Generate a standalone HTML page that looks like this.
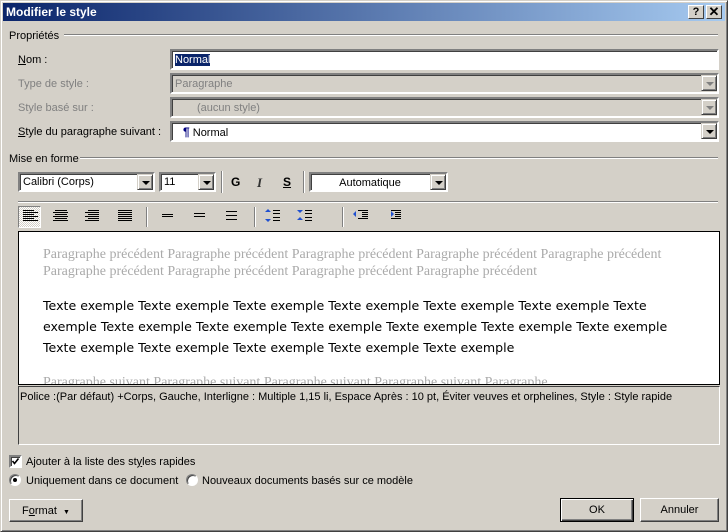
<!DOCTYPE html>
<html><head><meta charset="utf-8"><style>
*{margin:0;padding:0;box-sizing:border-box}
body{width:728px;height:532px;overflow:hidden;background:#d4d0c8;font-family:"Liberation Sans",sans-serif;font-size:11px;color:#000;position:relative}
.a{position:absolute;white-space:nowrap}
.win{position:absolute;left:0;top:0;width:728px;height:532px;border:1px solid;border-color:#d4d0c8 #404040 #404040 #d4d0c8;box-shadow:inset 1px 1px 0 #fff,inset -1px -1px 0 #808080}
.title{position:absolute;left:3px;top:3px;width:722px;height:18px;background:linear-gradient(90deg,#0a246a,#a6caf0);color:#fff;font-weight:bold;font-size:12px;line-height:18px;padding-left:3px}
.tb{position:absolute;top:5px;width:16px;height:14px;background:#d4d0c8;border:1px solid;border-color:#fff #404040 #404040 #fff;color:#000;font-size:11px;font-weight:bold;text-align:center;line-height:12px}
.line{position:absolute;height:2px;border-top:1px solid #808080;border-bottom:1px solid #fff}
.field{position:absolute;border:2px solid;border-color:#808080 #fff #fff #808080;box-shadow:inset 1px 1px 0 #404040;background:#fff;padding:3px 3px 0;line-height:13px}
.dis{background:#d4d0c8;color:#808080}
.dd{position:absolute;right:0;top:0;width:16px;height:16px;background:#d4d0c8;border:1px solid;border-color:#d4d0c8 #404040 #404040 #d4d0c8;box-shadow:inset 1px 1px 0 #fff,inset -1px -1px 0 #808080}
.dd:after{content:"";position:absolute;left:4px;top:6px;border-left:4px solid transparent;border-right:4px solid transparent;border-top:4px solid #000}
.dd.g:after{border-top-color:#808080}
.lbl{position:absolute;white-space:nowrap}
.gr{color:#808080}
.btn{position:absolute;background:#d4d0c8;border:1px solid;border-color:#fff #404040 #404040 #fff;box-shadow:inset -1px -1px 0 #808080;text-align:center}
.vs{position:absolute;width:2px;border-left:1px solid #808080;border-right:1px solid #fff}
.ic{position:absolute}
.pv{font-family:"Liberation Serif",serif;color:#aaa;font-size:14px}
.tx{font-family:"DejaVu Sans",sans-serif;font-size:12.6px;color:#000}
</style></head><body>
<div class="win"></div>
<div class="title">Modifier le style</div>
<div class="tb" style="left:688px">?</div>
<div class="tb" style="left:706px;font-size:13px">✕</div>

<div class="lbl" style="left:9px;top:30px">Propriétés</div>
<div class="line" style="left:64px;top:34px;width:654px"></div>

<div class="lbl" style="left:18px;top:54px"><u>N</u>om :</div>
<div class="field" style="left:170px;top:49px;width:549px;height:21px"><span style="background:#0a246a;color:#fff">Normal</span></div>

<div class="lbl gr" style="left:18px;top:78px">Type de style :</div>
<div class="field dis" style="left:170px;top:73px;width:549px;height:21px">Paragraphe<div class="dd g"></div></div>

<div class="lbl gr" style="left:18px;top:102px">Style basé sur :</div>
<div class="field dis" style="left:170px;top:97px;width:549px;height:21px"><span style="margin-left:22px">(aucun style)</span><div class="dd g"></div></div>

<div class="lbl" style="left:18px;top:126px"><u>S</u>tyle du paragraphe suivant :</div>
<div class="field" style="left:170px;top:121px;width:549px;height:21px"><span style="margin-left:8px;color:#000080;font-weight:bold;font-size:12px">¶</span> Normal<div class="dd"></div></div>

<div class="lbl" style="left:9px;top:153px">Mise en forme</div>
<div class="line" style="left:80px;top:157px;width:638px"></div>

<div class="field" style="left:18px;top:172px;width:137px;height:20px;padding-top:2px">Calibri (Corps)<div class="dd"></div></div>
<div class="field" style="left:159px;top:172px;width:57px;height:20px;padding-top:2px">11<div class="dd"></div></div>
<div class="vs" style="left:221px;top:171px;height:22px"></div>
<div class="lbl" style="left:231px;top:175px;font-weight:bold;font-size:12px">G</div>
<div class="lbl" style="left:257px;top:175px;font-style:italic;font-family:'Liberation Serif',serif;font-size:13px;font-weight:bold;color:#333">I</div>
<div class="lbl" style="left:283px;top:175px;font-weight:bold;text-decoration:underline;font-size:12px">S</div>
<div class="vs" style="left:303px;top:171px;height:22px"></div>
<div class="field" style="left:309px;top:172px;width:139px;height:20px;padding-top:3px;text-align:center;padding-right:20px">Automatique<div class="dd"></div></div>

<div class="line" style="left:18px;top:201px;width:700px"></div>
<div class="btn" style="left:18px;top:206px;width:23px;height:22px;border-color:#808080 #fff #fff #808080;box-shadow:none;background:repeating-conic-gradient(#fff 0 25%,#d4d0c8 0 50%) 0 0/2px 2px"></div>
<svg class="ic" style="left:0;top:0" width="728" height="240">
<g stroke="#000" stroke-width="1">
<path d="M23 210.5h11M23 212.5h15M23 214.5h11M23 216.5h15M23 218.5h11M23 220.5h15"/>
<path d="M55 210.5h12M53 212.5h15M55 214.5h12M53 216.5h15M55 218.5h12M53 220.5h15"/>
<path d="M88 210.5h11M85 212.5h14M88 214.5h11M85 216.5h14M88 218.5h11M85 220.5h14"/>
<path d="M118 210.5h14M118 212.5h14M118 214.5h14M118 216.5h14M118 218.5h14M118 220.5h14"/>
<path d="M162 214.5h11M162 216.5h11"/>
<path d="M194 213.5h11M194 216.5h11"/>
<path d="M226 211.5h11M226 215.5h11M226 219.5h11"/>
<path d="M273 210.5h7M273 213.5h7M273 217.5h7M273 220.5h7"/>
<path d="M305 210.5h7M305 213.5h7M305 217.5h7M305 220.5h7"/>
<path d="M358 210.5h10M362 212.5h6M362 214.5h6M362 216.5h6M358 218.5h10"/>
<path d="M391 210.5h10M395 212.5h6M395 214.5h6M395 216.5h6M391 218.5h10"/>
</g>
<g fill="#2050d0">
<path d="M268 209l3 3h-6zM268 222l3-3h-6zM300 213l3-3h-6zM300 217l3 3h-6zM353 214l3-3v6zM394 214l-3-3v6z"/>
</g>
</svg>
<div class="vs" style="left:146px;top:207px;height:20px"></div>
<div class="vs" style="left:254px;top:207px;height:20px"></div>
<div class="vs" style="left:342px;top:207px;height:20px"></div>

<div class="a" style="left:18px;top:231px;width:702px;height:154px;background:#fff;border:1px solid #000;overflow:hidden">
<div class="a pv" style="left:24px;top:14px;line-height:17px">Paragraphe précédent Paragraphe précédent Paragraphe précédent Paragraphe précédent Paragraphe précédent<br>Paragraphe précédent Paragraphe précédent Paragraphe précédent Paragraphe précédent</div>
<div class="a tx" style="left:24px;top:63px;line-height:21px">Texte exemple Texte exemple Texte exemple Texte exemple Texte exemple Texte exemple Texte<br>exemple Texte exemple Texte exemple Texte exemple Texte exemple Texte exemple Texte exemple<br>Texte exemple Texte exemple Texte exemple Texte exemple Texte exemple</div>
<div class="a pv" style="left:24px;top:143px">Paragraphe suivant Paragraphe suivant Paragraphe suivant Paragraphe suivant Paragraphe</div>
</div>
<div class="a" style="left:18px;top:386px;width:702px;height:59px;border:1px solid;border-color:#404040 #fff #fff #404040;padding:4px 1px">Police :(Par défaut) +Corps, Gauche, Interligne : Multiple 1,15 li, Espace Après : 10 pt, Éviter veuves et orphelines, Style : Style rapide</div>

<div class="a" style="left:9px;top:455px;width:13px;height:13px;background:#fff;border:2px solid;border-color:#808080 #fff #fff #808080;box-shadow:inset 1px 1px 0 #404040"><svg width="9" height="9" style="position:absolute;left:0;top:0"><path d="M1.5 4l2 2.5 4-5" stroke="#000" stroke-width="1.6" fill="none"/></svg></div>
<div class="lbl" style="left:26px;top:456px">Ajouter à la liste des st<u>y</u>les rapides</div>
<div class="a" style="left:9px;top:474px;width:12px;height:12px;border-radius:50%;background:#fff;border:1px solid;border-color:#808080 #fff #fff #808080;box-shadow:inset 1px 1px 0 #404040"><div style="position:absolute;left:3px;top:3px;width:4px;height:4px;background:#000;border-radius:50%"></div></div>
<div class="lbl" style="left:26px;top:475px">Uniquement dans ce document</div>
<div class="a" style="left:186px;top:474px;width:12px;height:12px;border-radius:50%;background:#fff;border:1px solid;border-color:#808080 #fff #fff #808080;box-shadow:inset 1px 1px 0 #404040"></div>
<div class="lbl" style="left:202px;top:475px">Nouveaux documents basés sur ce modèle</div>

<div class="btn" style="left:9px;top:499px;width:74px;height:23px;line-height:22px">F<u>o</u>rmat &nbsp;<span style="font-size:7px">▼</span></div>
<div class="btn" style="left:560px;top:498px;width:74px;height:24px;line-height:22px;border:1px solid #000;box-shadow:inset 1px 1px 0 #fff,inset -1px -1px 0 #404040,inset -2px -2px 0 #808080">OK</div>
<div class="btn" style="left:640px;top:498px;width:79px;height:24px;line-height:22px">Annuler</div>
</body></html>
